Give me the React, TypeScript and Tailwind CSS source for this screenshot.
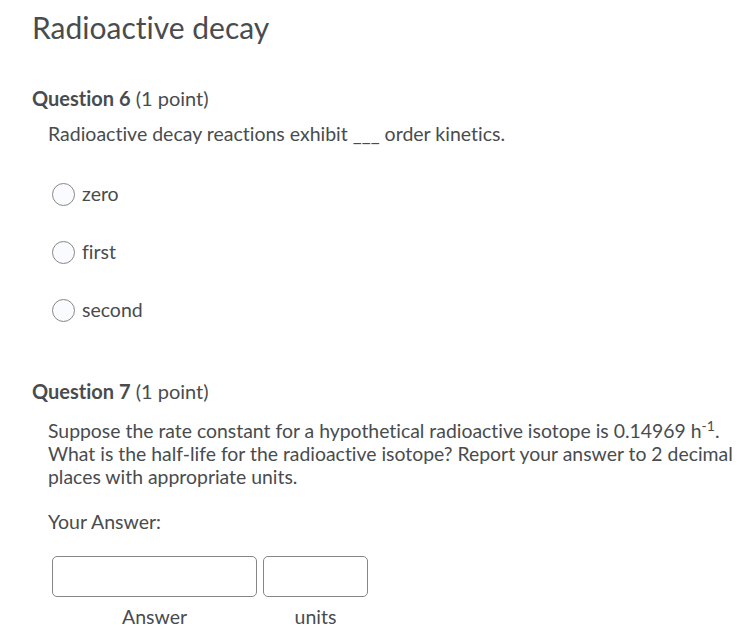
import { useState } from 'react';

const choices = ['zero', 'first', 'second'];

export default function App() {
  const [picked, setPicked] = useState<string | null>(null);

  return (
    <div className="min-h-screen bg-white text-[#494c4e] font-['Lato','Liberation_Sans',sans-serif] [font-variant-ligatures:none]">
      <div className="pl-[32px] pr-[10px] pt-[8px]">
        <h1 className="text-[30px] leading-[38px] font-normal">Radioactive decay</h1>

        {/* Question 6 */}
        <section className="mt-[40px]">
          <h2 className="text-[20px] leading-[24px]">
            <span className="font-bold">Question 6</span> (1 point)
          </h2>
          <p className="mt-[12px] pl-[16px] text-[19.5px] leading-[24px]">
            Radioactive decay reactions exhibit ___ order kinetics.
          </p>
          <div className="mt-[36px] pl-[20px] flex flex-col gap-[34px]">
            {choices.map(c => (
              <label key={c} className="flex items-center gap-[7px] h-[24px] cursor-pointer text-[19.5px]">
                <span
                  onClick={() => setPicked(c)}
                  className={`w-[23px] h-[23px] rounded-full border border-[#868686] ${picked === c ? 'bg-[#006fbf]' : 'bg-[#f9fbff]'}`}
                />
                {c}
              </label>
            ))}
          </div>
        </section>

        {/* Question 7 */}
        <section className="mt-[57px]">
          <h2 className="text-[20px] leading-[24px]">
            <span className="font-bold">Question 7</span> (1 point)
          </h2>
          <p className="mt-[16px] pl-[16px] text-[19.4px] leading-[23px]">
            Suppose the rate constant for a hypothetical radioactive isotope is 0.14969 h<sup className="text-[14px] leading-none">-1</sup>.
            What is the half-life for the radioactive isotope? Report your answer to 2 decimal places with appropriate units.
          </p>
          <p className="mt-[22px] pl-[16px] text-[19.5px] leading-[24px]">Your Answer:</p>
          <div className="mt-[22px] pl-[20px] flex gap-[6px]">
            <div className="flex flex-col items-center">
              <input className="w-[205px] h-[41px] rounded-[5px] border border-[#868686] bg-white outline-none px-2" />
              <span className="mt-[8px] text-[19.5px] leading-[24px]">Answer</span>
            </div>
            <div className="flex flex-col items-center">
              <input className="w-[105px] h-[41px] rounded-[5px] border border-[#868686] bg-white outline-none px-2" />
              <span className="mt-[8px] text-[19.5px] leading-[24px]">units</span>
            </div>
          </div>
        </section>
      </div>
    </div>
  );
}
